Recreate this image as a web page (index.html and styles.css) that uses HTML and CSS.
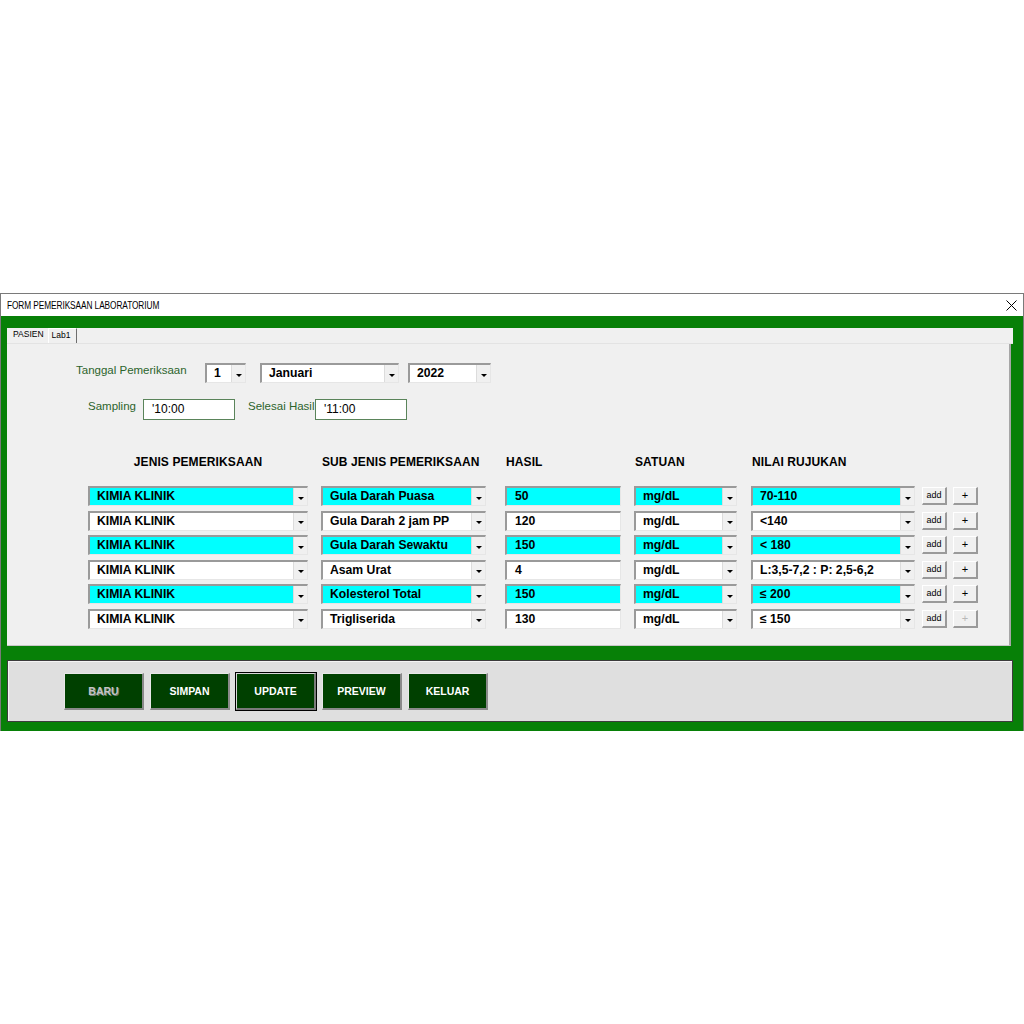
FILE: index.html
```html
<!DOCTYPE html>
<html lang="id">
<head>
<meta charset="utf-8">
<title>Form Pemeriksaan Laboratorium</title>
<link rel="stylesheet" href="styles.css">
</head>
<body>
<div class="page">
  <div class="window">
    <div class="titlebar">
      <span class="title">FORM PEMERIKSAAN LABORATORIUM</span>
      <svg class="close" width="11" height="11" viewBox="0 0 11 11"><path d="M0.5 0.5 L10.5 10.5 M10.5 0.5 L0.5 10.5" stroke="#000" stroke-width="1" fill="none"/></svg>
    </div>
    <div class="frame">
      <div class="tabs">
        <div class="tabstrip">
          <span class="tab">PASIEN</span>
          <span class="tab active">Lab1</span>
        </div>
        <div class="tabpanel">
          <div class="daterow">
            <span class="lbl lbl-tgl">Tanggal Pemeriksaan</span>
            <div class="combo w-day"><span class="val">1</span><span class="dd"><i></i></span></div>
            <div class="combo w-month"><span class="val">Januari</span><span class="dd"><i></i></span></div>
            <div class="combo w-year"><span class="val">2022</span><span class="dd"><i></i></span></div>
          </div>
          <div class="samprow">
            <span class="lbl lbl-samp">Sampling</span>
            <div class="tbox">'10:00</div>
            <span class="lbl lbl-sel">Selesai Hasil</span>
            <div class="tbox">'11:00</div>
          </div>
          <div class="hdr">
            <span class="c-jenis h-center">JENIS PEMERIKSAAN</span>
            <span class="c-sub">SUB JENIS PEMERIKSAAN</span>
            <span class="c-hasil">HASIL</span>
            <span class="c-sat">SATUAN</span>
            <span class="c-nil">NILAI RUJUKAN</span>
          </div>
          <div class="rows">
            <div class="row cyan">
              <div class="combo c-jenis"><span class="val">KIMIA KLINIK</span><span class="dd"><i></i></span></div>
              <div class="combo c-sub"><span class="val">Gula Darah Puasa</span><span class="dd"><i></i></span></div>
              <div class="field c-hasil">50</div>
              <div class="combo c-sat"><span class="val">mg/dL</span><span class="dd"><i></i></span></div>
              <div class="combo c-nil"><span class="val">70-110</span><span class="dd"><i></i></span></div>
              <div class="sbtn c-add">add</div>
              <div class="sbtn c-plus">+</div>
            </div>
            <div class="row">
              <div class="combo c-jenis"><span class="val">KIMIA KLINIK</span><span class="dd"><i></i></span></div>
              <div class="combo c-sub"><span class="val">Gula Darah 2 jam PP</span><span class="dd"><i></i></span></div>
              <div class="field c-hasil">120</div>
              <div class="combo c-sat"><span class="val">mg/dL</span><span class="dd"><i></i></span></div>
              <div class="combo c-nil"><span class="val">&lt;140</span><span class="dd"><i></i></span></div>
              <div class="sbtn c-add">add</div>
              <div class="sbtn c-plus">+</div>
            </div>
            <div class="row cyan">
              <div class="combo c-jenis"><span class="val">KIMIA KLINIK</span><span class="dd"><i></i></span></div>
              <div class="combo c-sub"><span class="val">Gula Darah Sewaktu</span><span class="dd"><i></i></span></div>
              <div class="field c-hasil">150</div>
              <div class="combo c-sat"><span class="val">mg/dL</span><span class="dd"><i></i></span></div>
              <div class="combo c-nil"><span class="val">&lt; 180</span><span class="dd"><i></i></span></div>
              <div class="sbtn c-add">add</div>
              <div class="sbtn c-plus">+</div>
            </div>
            <div class="row">
              <div class="combo c-jenis"><span class="val">KIMIA KLINIK</span><span class="dd"><i></i></span></div>
              <div class="combo c-sub"><span class="val">Asam Urat</span><span class="dd"><i></i></span></div>
              <div class="field c-hasil">4</div>
              <div class="combo c-sat"><span class="val">mg/dL</span><span class="dd"><i></i></span></div>
              <div class="combo c-nil"><span class="val">L:3,5-7,2 : P: 2,5-6,2</span><span class="dd"><i></i></span></div>
              <div class="sbtn c-add">add</div>
              <div class="sbtn c-plus">+</div>
            </div>
            <div class="row cyan">
              <div class="combo c-jenis"><span class="val">KIMIA KLINIK</span><span class="dd"><i></i></span></div>
              <div class="combo c-sub"><span class="val">Kolesterol Total</span><span class="dd"><i></i></span></div>
              <div class="field c-hasil">150</div>
              <div class="combo c-sat"><span class="val">mg/dL</span><span class="dd"><i></i></span></div>
              <div class="combo c-nil"><span class="val">≤ 200</span><span class="dd"><i></i></span></div>
              <div class="sbtn c-add">add</div>
              <div class="sbtn c-plus">+</div>
            </div>
            <div class="row">
              <div class="combo c-jenis"><span class="val">KIMIA KLINIK</span><span class="dd"><i></i></span></div>
              <div class="combo c-sub"><span class="val">Trigliserida</span><span class="dd"><i></i></span></div>
              <div class="field c-hasil">130</div>
              <div class="combo c-sat"><span class="val">mg/dL</span><span class="dd"><i></i></span></div>
              <div class="combo c-nil"><span class="val">≤ 150</span><span class="dd"><i></i></span></div>
              <div class="sbtn c-add">add</div>
              <div class="sbtn c-plus disabled">+</div>
            </div>
          </div>
        </div>
      </div>
      <div class="buttonbar">
        <div class="btn btn-baru">BARU</div>
        <div class="btn">SIMPAN</div>
        <div class="btn focus">UPDATE</div>
        <div class="btn">PREVIEW</div>
        <div class="btn">KELUAR</div>
      </div>
    </div>
  </div>
</div>
</body>
</html>
```

FILE: styles.css
```css
* { box-sizing: border-box; }
html, body { margin: 0; padding: 0; background: #ffffff; }
body { font-family: "Liberation Sans", Arial, sans-serif; color: #000; }

.page { padding-top: 293px; width: 1024px; }

.window {
  width: 1024px;
  border: 1px solid #7a7a7a;
  border-bottom: none;
  background: #fff;
}

.titlebar {
  height: 22px;
  display: flex;
  align-items: center;
  justify-content: space-between;
  padding: 0 6px 0 6px;
  background: #fff;
}
.title {
  display: block;
  font-size: 10px;
  letter-spacing: -0.1px;
  color: #000;
  transform: scaleX(0.83);
  transform-origin: left center;
  white-space: nowrap;
}
.close { display: block; margin-top: 1px; }

.frame {
  background: #078007;
  padding: 12px 10px 9px 6px;
}

.tabs { width: 1006px; }
.tabstrip {
  height: 16px;
  background: #f0f0f0;
  display: flex;
  align-items: flex-end;
  padding-left: 2px;
  border-bottom: 1px solid #e3e3e3;
}
.tab {
  font-size: 8.5px;
  height: 15px;
  line-height: 13px;
  padding: 0 4px;
  color: #000;
}
.tab.active {
  padding: 0 6px 0 3px;
  border-right: 1px solid #6e6e6e;
  border-left: 1px solid #fff;
  border-top: 1px solid #fff;
}

.tabpanel {
  width: 1004px;
  height: 302px;
  background: #f0f0f0;
  border-right: 2px solid #a6a6a6;
  border-bottom: 1px solid #c8c8c8;
  padding-top: 19px;
}

.lbl { font-size: 11.5px; line-height: 14px; color: #2c642c; white-space: nowrap; }

.daterow { display: flex; align-items: flex-start; padding-left: 69px; height: 20px; }
.lbl-tgl { width: 129px; margin-top: 0; }
.w-day { width: 41px; }
.w-month { width: 139px; margin-left: 14px; }
.w-year { width: 83px; margin-left: 9px; }

.samprow { display: flex; align-items: flex-start; padding-left: 81px; margin-top: 16px; height: 21px; }
.lbl-samp { width: 55px; margin-top: 0; }
.lbl-sel { width: 67px; margin-left: 13px; }
.tbox {
  width: 92px;
  height: 21px;
  border: 1px solid #5a845a;
  background: #fff;
  font-size: 12px;
  line-height: 19px;
  padding-left: 8px;
}

.hdr {
  display: flex;
  padding-left: 81px;
  margin-top: 35px;
  font-size: 12px;
  font-weight: bold;
  line-height: 14px;
  letter-spacing: 0.1px;
}
.hdr span { display: block; padding-left: 1px; white-space: nowrap; }
.hdr .h-center { text-align: center; padding-left: 0; }

.rows {
  display: flex;
  flex-direction: column;
  gap: 4.6px;
  margin-top: 17px;
  padding-left: 81px;
}
.row { display: flex; height: 20px; align-items: flex-start; }

.c-jenis { width: 220px; }
.c-sub { width: 165px; margin-left: 13px; }
.c-hasil { width: 116px; margin-left: 19px; }
.c-sat { width: 103px; margin-left: 13px; }
.c-nil { width: 164px; margin-left: 14px; }
.c-add { width: 25px; margin-left: 7px; }
.c-plus { width: 25px; margin-left: 6px; }

.combo, .field {
  height: 20px;
  display: flex;
  background: #fff;
  border-style: solid;
  border-width: 2px 1px 1px 2px;
  border-color: #9a9a9a #e6e6e6 #e6e6e6 #9a9a9a;
  font-size: 12.2px;
  font-weight: bold;
  line-height: 17px;
}
.field { padding-left: 8px; }
.combo .val { flex: 1; padding-left: 7px; white-space: nowrap; overflow: hidden; }
.combo .dd {
  width: 14px;
  height: 17px;
  background: #f0f0f0;
  border-left: 1px solid #dcdcdc;
  display: flex;
  align-items: center;
  justify-content: center;
}
.combo .dd i {
  display: block;
  width: 0; height: 0;
  border-left: 3px solid transparent;
  border-right: 3px solid transparent;
  border-top: 3px solid #000;
  margin-top: 3px;
}
.row.cyan .combo .val, .row.cyan .field { background: #00ffff; }
.row.cyan .combo { background: #00ffff; }

.sbtn {
  height: 18px;
  margin-top: 1px;
  background: #f0f0f0;
  border-style: solid;
  border-width: 1px 2px 2px 1px;
  border-color: #ffffff #9a9a9a #9a9a9a #ffffff;
  font-size: 9px;
  line-height: 15px;
  text-align: center;
  color: #000;
}
.sbtn.c-plus { font-size: 11px; }
.sbtn.disabled { color: #b8b8b8; }

.buttonbar {
  width: 1006px;
  height: 62px;
  margin-top: 14px;
  background: #dfdfdf;
  border: 1px solid #3c3c3c;
  box-shadow: inset 1px 1px 0 #f4f4f4;
  display: flex;
  gap: 6px;
  padding: 12px 0 0 56px;
}
.btn {
  width: 80px;
  height: 37px;
  background: #004000;
  border-style: solid;
  border-width: 1px 2px 2px 1px;
  border-color: #e8e8e8 #8a8a8a #8a8a8a #e8e8e8;
  color: #fff;
  font-weight: bold;
  font-size: 10.5px;
  display: flex;
  align-items: center;
  justify-content: center;
}
.btn-baru { color: #c4c4c4; text-shadow: 1px 1px 0 #6d7d6d; }
.btn.focus { outline: 1px solid #000; outline-offset: 0; border-color: #d8d8d8 #7a7a7a #7a7a7a #d8d8d8; }
```
